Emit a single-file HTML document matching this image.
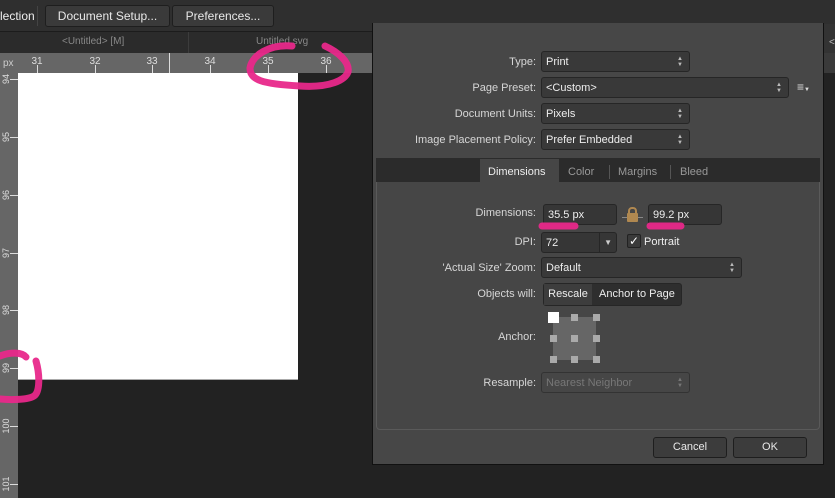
<!DOCTYPE html>
<html><head><meta charset="utf-8"><style>
*{box-sizing:border-box;margin:0;padding:0}
body{width:835px;height:498px;overflow:hidden;background:#222;font-family:"Liberation Sans",sans-serif;font-size:11px;color:#ddd;position:relative}
.abs{position:absolute}
.btn{position:absolute;border:1px solid #1e1e1e;background:#3a3a3a;border-radius:3px;color:#e8e8e8;text-align:center;font-size:12px}
.lbl{position:absolute;right:0;text-align:right;color:#d6d6d6;font-size:11px}
.sel{position:absolute;background:#393939;border:1px solid #262626;border-radius:3px;color:#eee;font-size:11px;padding-left:4px;line-height:20px;height:21px}
.sel .ar{position:absolute;right:6px;top:4px;font-size:6px;line-height:6px;color:#bbb}
</style></head><body>
<div class="abs" style="left:0;top:0;width:835px;height:32px;background:#2f2f2f;border-bottom:1px solid #1c1c1c"></div>
<div class="abs" style="left:0;top:9px;color:#eee;font-size:12px">lection</div>
<div class="abs" style="left:37px;top:6px;width:1px;height:20px;background:#444"></div>
<div class="btn" style="left:45px;top:5px;width:125px;height:22px;line-height:20px">Document Setup...</div>
<div class="btn" style="left:172px;top:5px;width:102px;height:22px;line-height:20px">Preferences...</div>
<div class="abs" style="left:0;top:32px;width:373px;height:21px;background:#2b2b2b"></div>
<div class="abs" style="left:188px;top:32px;width:1px;height:21px;background:#3c3c3c"></div>
<div class="abs" style="left:62px;top:36px;color:#888;font-size:10px">&lt;Untitled&gt; [M]</div>
<div class="abs" style="left:256px;top:36px;color:#888;font-size:10px">Untitled.svg</div>
<div class="abs" style="left:0;top:53px;width:373px;height:20px;background:#666"></div>
<div class="abs" style="left:0;top:53px;width:18px;height:445px;background:#666"></div>
<div class="abs" style="left:3px;top:58px;color:#ccc;font-size:10px">px</div>
<div class="abs" style="left:169px;top:53px;width:1px;height:20px;background:#ddd"></div>
<div class="abs" style="left:18px;top:73px;width:280px;height:307px;background:#fff;border-bottom:1px solid #aaa"></div>
<div class="abs" style="left:823px;top:24px;width:12px;height:29px;background:#333"></div>
<div class="abs" style="left:823px;top:53px;width:12px;height:20px;background:#3a3a3a"></div>
<div class="abs" style="left:829px;top:37px;color:#bbb;font-size:10px">&lt;</div>
<div class="abs" style="left:372px;top:23px;width:452px;height:442px;background:#474747;border:1px solid #111;border-top:none"></div>
<div class="abs" style="left:373px;top:24px;width:450px;height:440px">
  <div class="lbl" style="right:287px;top:32px">Type:</div>
  <div class="sel" style="left:168px;top:27px;width:149px">Print<span class="ar">▲<br>▼</span></div>
  <div class="lbl" style="right:287px;top:58px">Page Preset:</div>
  <div class="sel" style="left:168px;top:53px;width:248px">&lt;Custom&gt;<span class="ar">▲<br>▼</span></div>
  <div class="abs" style="left:424px;top:58px;color:#ddd;font-size:12px;line-height:10px">≡<span style="font-size:6px">▼</span></div>
  <div class="lbl" style="right:287px;top:84px">Document Units:</div>
  <div class="sel" style="left:168px;top:79px;width:149px">Pixels<span class="ar">▲<br>▼</span></div>
  <div class="lbl" style="right:287px;top:110px">Image Placement Policy:</div>
  <div class="sel" style="left:168px;top:105px;width:149px">Prefer Embedded<span class="ar">▲<br>▼</span></div>
  <div class="abs" style="left:3px;top:134px;width:444px;height:272px;border:1px solid #5a5a5a;border-radius:0 0 4px 4px;background:#464646"></div>
  <div class="abs" style="left:3px;top:134px;width:444px;height:24px;background:#2b2b2b"></div>
  <div class="abs" style="left:107px;top:135px;width:79px;height:23px;background:#464646"></div>
  <div class="abs" style="left:115px;top:142px;color:#eee">Dimensions</div>
  <div class="abs" style="left:195px;top:142px;color:#999">Color</div>
  <div class="abs" style="left:236px;top:141px;width:1px;height:14px;background:#555"></div>
  <div class="abs" style="left:245px;top:142px;color:#999">Margins</div>
  <div class="abs" style="left:297px;top:141px;width:1px;height:14px;background:#555"></div>
  <div class="abs" style="left:307px;top:142px;color:#999">Bleed</div>
  <div class="lbl" style="right:287px;top:183px">Dimensions:</div>
  <div class="sel" style="left:170px;top:180px;width:74px;background:#363636">35.5 px</div>
  <div class="abs" style="left:255px;top:183px;width:9px;height:7px;border:2px solid #b08850;border-bottom:none;border-radius:4px 4px 0 0"></div>
  <div class="abs" style="left:254px;top:189px;width:11px;height:9px;background:#b08850;border-radius:1px"></div>
  <div class="abs" style="left:249px;top:193px;width:5px;height:1px;background:#888"></div>
  <div class="abs" style="left:265px;top:193px;width:5px;height:1px;background:#888"></div>
  <div class="sel" style="left:275px;top:180px;width:74px;background:#363636">99.2 px</div>
  <div class="lbl" style="right:287px;top:212px">DPI:</div>
  <div class="sel" style="left:168px;top:208px;width:76px;background:#363636">72<span style="position:absolute;left:57px;top:0;width:1px;height:19px;background:#262626"></span><span style="position:absolute;right:4px;top:0;font-size:8px;color:#ccc">▼</span></div>
  <div class="abs" style="left:254px;top:210px;width:14px;height:14px;border:1px solid #222;border-radius:2px;background:#3a3a3a;color:#fff;font-size:12px;line-height:12px;text-align:center">✓</div>
  <div class="abs" style="left:271px;top:212px;color:#eee">Portrait</div>
  <div class="lbl" style="right:287px;top:238px">'Actual Size' Zoom:</div>
  <div class="sel" style="left:168px;top:233px;width:201px">Default<span class="ar">▲<br>▼</span></div>
  <div class="lbl" style="right:287px;top:264px">Objects will:</div>
  <div class="abs" style="left:170px;top:259px;width:139px;height:23px;border:1px solid #262626;border-radius:3px;background:#2e2e2e"></div>
  <div class="abs" style="left:171px;top:260px;width:48px;height:21px;background:#3d3d3d;color:#eee;line-height:21px;text-align:center">Rescale</div>
  <div class="abs" style="left:226px;top:264px;color:#eee">Anchor to Page</div>
  <div class="lbl" style="right:287px;top:307px">Anchor:</div>
  <div class="abs" style="left:180px;top:293px;width:43px;height:43px;background:#666"></div>
  <div class="abs" style="left:175px;top:288px;width:11px;height:11px;background:#fff"></div>
  <div class="abs" style="left:198px;top:290px;width:7px;height:7px;background:#aaa"></div>
  <div class="abs" style="left:220px;top:290px;width:7px;height:7px;background:#aaa"></div>
  <div class="abs" style="left:177px;top:311px;width:7px;height:7px;background:#aaa"></div>
  <div class="abs" style="left:198px;top:311px;width:7px;height:7px;background:#aaa"></div>
  <div class="abs" style="left:220px;top:311px;width:7px;height:7px;background:#aaa"></div>
  <div class="abs" style="left:177px;top:332px;width:7px;height:7px;background:#aaa"></div>
  <div class="abs" style="left:198px;top:332px;width:7px;height:7px;background:#aaa"></div>
  <div class="abs" style="left:220px;top:332px;width:7px;height:7px;background:#aaa"></div>
  <div class="lbl" style="right:287px;top:353px">Resample:</div>
  <div class="sel" style="left:168px;top:348px;width:149px;background:#464646;border-color:#333;color:#777">Nearest Neighbor<span class="ar" style="color:#777">▲<br>▼</span></div>
  <div class="btn" style="left:280px;top:413px;width:74px;height:21px;line-height:19px;font-size:11px;background:#3c3c3c">Cancel</div>
  <div class="btn" style="left:360px;top:413px;width:74px;height:21px;line-height:19px;font-size:11px;background:#3c3c3c">OK</div>
</div>
<svg class="abs" style="left:0;top:0" width="373" height="498">
 <g stroke="#ddd" stroke-width="1">
  <line x1="37.5" y1="65" x2="37.5" y2="73"/><line x1="95.5" y1="65" x2="95.5" y2="73"/><line x1="152.5" y1="65" x2="152.5" y2="73"/><line x1="210.5" y1="65" x2="210.5" y2="73"/><line x1="268.5" y1="65" x2="268.5" y2="73"/><line x1="326.5" y1="65" x2="326.5" y2="73"/>
  <line x1="10" y1="79.5" x2="18" y2="79.5"/><line x1="10" y1="137.5" x2="18" y2="137.5"/><line x1="10" y1="195.5" x2="18" y2="195.5"/><line x1="10" y1="253.5" x2="18" y2="253.5"/><line x1="10" y1="310.5" x2="18" y2="310.5"/><line x1="10" y1="368.5" x2="18" y2="368.5"/><line x1="10" y1="426.5" x2="18" y2="426.5"/><line x1="10" y1="484.5" x2="18" y2="484.5"/>
 </g>
 <g fill="#ddd" font-family="Liberation Sans" font-size="10" text-anchor="middle">
  <text x="37" y="64">31</text><text x="95" y="64">32</text><text x="152" y="64">33</text><text x="210" y="64">34</text><text x="268" y="64">35</text><text x="326" y="64">36</text>
  <g font-size="9"><text transform="translate(9,79) rotate(-90)">94</text><text transform="translate(9,137) rotate(-90)">95</text><text transform="translate(9,195) rotate(-90)">96</text><text transform="translate(9,253) rotate(-90)">97</text><text transform="translate(9,310) rotate(-90)">98</text><text transform="translate(9,368) rotate(-90)">99</text><text transform="translate(9,426) rotate(-90)">100</text><text transform="translate(9,484) rotate(-90)">101</text></g>
 </g>
</svg>
<svg class="abs" style="left:0;top:0" width="835" height="498">
 <g fill="none" stroke="#e8288a" stroke-width="7" stroke-linecap="round" opacity="0.95">
  <path d="M292 46 C270 44 252 55 250 68 C250 80 262 84 300 86 C330 88 345 80 348 72 C350 62 338 52 325 46"/>
  <path d="M0 356 C10 352 22 352 26 357 M36 361 C40 375 40 392 34 396 C28 400 10 400 0 399"/>
  <path d="M542 226 L575 226"/><path d="M650 226 L681 226"/>
 </g>
</svg>
</body></html>
